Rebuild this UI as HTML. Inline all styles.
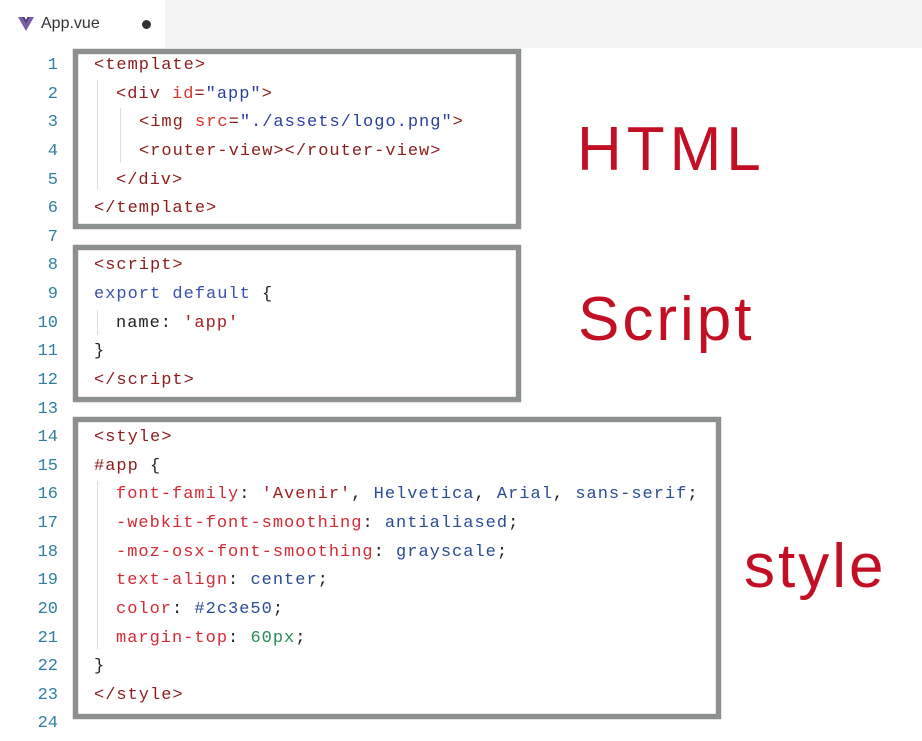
<!DOCTYPE html>
<html><head><meta charset="utf-8"><style>
body{margin:0;width:922px;height:741px;background:#fff;position:relative;overflow:hidden;font-family:"Liberation Sans",sans-serif}
.tabbar{position:absolute;left:0;top:0;width:922px;height:48px;background:#f3f3f3}
.tab{position:absolute;left:0;top:0;width:165px;height:48px;background:#fff}
.tab span{position:absolute;left:41px;top:15px;font-size:16px;color:#333}
.dot{position:absolute;left:142px;top:20px;width:9px;height:9px;border-radius:50%;background:#333}
.box{position:absolute;border:5px solid #8c9190;box-shadow:0 0 1px #777, inset 0 0 1px #777}
.ln{position:absolute;left:20px;width:38px;text-align:right;font:17px "Liberation Mono",monospace;color:#2f7f9e;line-height:20px;margin-top:2px}
.c{position:absolute;font:17px "Liberation Mono",monospace;letter-spacing:1px;line-height:20px;white-space:pre;color:#222;margin-top:2px}
.t{color:#8b1c1c}.a{color:#e0302a}.s{color:#2a3f9f}.k{color:#3a4fae}.p{color:#d52a33}.v{color:#2b4b95}.n{color:#2a8a55}.q{color:#a02020}
.guide{position:absolute;width:1px;background:#ddd}
.big{position:absolute;color:#c20f24;font-family:"Liberation Sans",sans-serif;font-size:62px;line-height:1}
</style></head><body>
<div class="tabbar"><div class="tab">
<svg style="position:absolute;left:18px;top:17px" width="16" height="14" viewBox="0 0 16 14"><path d="M0 0H4L8 7L12 0H16L8 14Z" fill="#7a5ca8"/><path d="M4 0H6.5L8 3L9.5 0H12L8 7Z" fill="#4a3a78"/></svg>
<span>App.vue</span><div class="dot"></div></div></div>

<div class="box" style="left:73px;top:49px;width:438px;height:170px"></div>
<div class="box" style="left:73px;top:245px;width:438px;height:147px"></div>
<div class="box" style="left:73px;top:417px;width:638px;height:292px"></div>

<div class="guide" style="left:97px;top:80px;height:110px"></div>
<div class="guide" style="left:120px;top:108px;height:55px"></div>
<div class="guide" style="left:97px;top:310px;height:25px"></div>
<div class="guide" style="left:97px;top:481px;height:168px"></div>

<div class="ln" style="top:54px">1</div>
<div class="ln" style="top:83px">2</div>
<div class="ln" style="top:111px">3</div>
<div class="ln" style="top:140px">4</div>
<div class="ln" style="top:169px">5</div>
<div class="ln" style="top:197px">6</div>
<div class="ln" style="top:226px">7</div>
<div class="ln" style="top:254px">8</div>
<div class="ln" style="top:283px">9</div>
<div class="ln" style="top:312px">10</div>
<div class="ln" style="top:340px">11</div>
<div class="ln" style="top:369px">12</div>
<div class="ln" style="top:398px">13</div>
<div class="ln" style="top:426px">14</div>
<div class="ln" style="top:455px">15</div>
<div class="ln" style="top:483px">16</div>
<div class="ln" style="top:512px">17</div>
<div class="ln" style="top:541px">18</div>
<div class="ln" style="top:569px">19</div>
<div class="ln" style="top:598px">20</div>
<div class="ln" style="top:627px">21</div>
<div class="ln" style="top:655px">22</div>
<div class="ln" style="top:684px">23</div>
<div class="ln" style="top:712px">24</div>

<div class="c" style="left:94px;top:54px"><span class="t">&lt;template&gt;</span></div>
<div class="c" style="left:116px;top:83px"><span class="t">&lt;div </span><span class="a">id</span><span class="t">=</span><span class="s">"app"</span><span class="t">&gt;</span></div>
<div class="c" style="left:139px;top:111px"><span class="t">&lt;img </span><span class="a">src</span><span class="t">=</span><span class="s">"./assets/logo.png"</span><span class="t">&gt;</span></div>
<div class="c" style="left:139px;top:140px"><span class="t">&lt;router-view&gt;&lt;/router-view&gt;</span></div>
<div class="c" style="left:116px;top:169px"><span class="t">&lt;/div&gt;</span></div>
<div class="c" style="left:94px;top:197px"><span class="t">&lt;/template&gt;</span></div>

<div class="c" style="left:94px;top:254px"><span class="t">&lt;script&gt;</span></div>
<div class="c" style="left:94px;top:283px"><span class="k">export default</span> {</div>
<div class="c" style="left:116px;top:312px">name: <span class="q">'app'</span></div>
<div class="c" style="left:94px;top:340px">}</div>
<div class="c" style="left:94px;top:369px"><span class="t">&lt;/script&gt;</span></div>

<div class="c" style="left:94px;top:426px"><span class="t">&lt;style&gt;</span></div>
<div class="c" style="left:94px;top:455px"><span class="t">#app</span> {</div>
<div class="c" style="left:116px;top:483px"><span class="p">font-family</span>: <span class="q">'Avenir'</span>, <span class="v">Helvetica</span>, <span class="v">Arial</span>, <span class="v">sans-serif</span>;</div>
<div class="c" style="left:116px;top:512px"><span class="p">-webkit-font-smoothing</span>: <span class="v">antialiased</span>;</div>
<div class="c" style="left:116px;top:541px"><span class="p">-moz-osx-font-smoothing</span>: <span class="v">grayscale</span>;</div>
<div class="c" style="left:116px;top:569px"><span class="p">text-align</span>: <span class="v">center</span>;</div>
<div class="c" style="left:116px;top:598px"><span class="p">color</span>: <span class="v">#2c3e50</span>;</div>
<div class="c" style="left:116px;top:627px"><span class="p">margin-top</span>: <span class="n">60px</span>;</div>
<div class="c" style="left:94px;top:655px">}</div>
<div class="c" style="left:94px;top:684px"><span class="t">&lt;/style&gt;</span></div>

<div class="big" style="left:577px;top:119px;letter-spacing:5px">HTML</div>
<div class="big" style="left:578px;top:289px;letter-spacing:3px">Script</div>
<div class="big" style="left:744px;top:536px;letter-spacing:3px">style</div>
</body></html>
